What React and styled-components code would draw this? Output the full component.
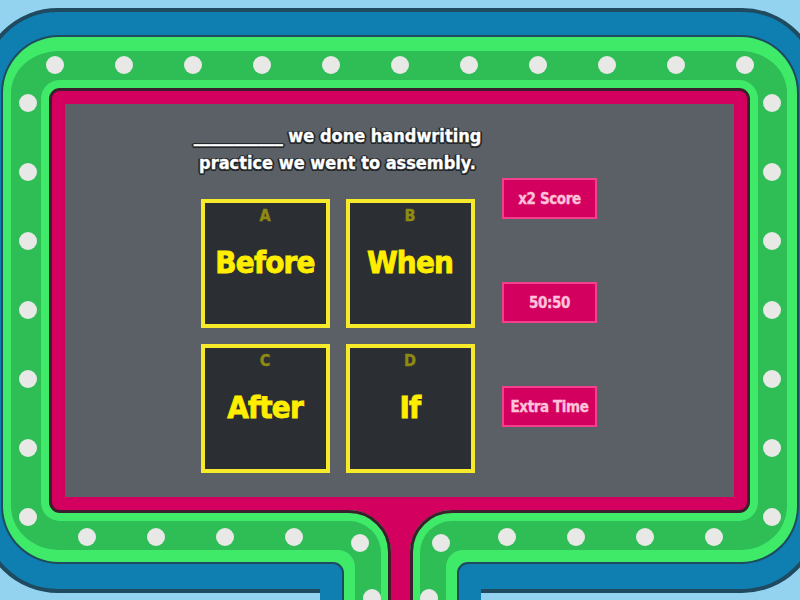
import styled, { createGlobalStyle } from 'styled-components';

const GlobalStyle = createGlobalStyle`
	html,
	body {
		margin: 0;
		padding: 0;
		width: 800px;
		height: 600px;
		overflow: hidden;
		background: #93d3ef;
	}
`;

const Stage = styled.div`
	position: relative;
	width: 800px;
	height: 600px;
	overflow: hidden;
	background: #93d3ef;
	padding-top: 8px;
	box-sizing: border-box;
`;

/* Outer blue cabinet */
const Shell = styled.div`
	box-sizing: border-box;
	width: 840px;
	height: 585px;
	margin-left: -20px;
	padding: 25px 19px 27px;
	background: #0e7fb0;
	border: 4px solid #1f4a5f;
	border-radius: 78px;
`;

/* Green light-bulb ring */
const Ring = styled.div`
	box-sizing: border-box;
	width: 794px;
	height: 525px;
	background: #2fbd55;
	border-style: solid;
	border-color: #3eea68;
	border-width: 14px 10px 12px 8px;
	border-radius: 56px;
	box-shadow: 0 0 0 2px #1f4a5f;

	display: grid;
	grid-template-columns: 41px 1fr 40px;
	grid-template-rows: 40px 1fr 40px;
`;

const DotStrip = styled.div`
	display: flex;
	flex-direction: ${(props) => (props.vertical ? 'column' : 'row')};
	justify-content: ${(props) => props.justify || 'flex-start'};
	gap: 51px;
	padding: ${(props) => props.pad};
	grid-column: ${(props) => props.col};
	grid-row: ${(props) => props.row};
`;

const DotGroup = styled.div`
	display: flex;
	gap: 51px;
`;

const Dot = styled.span`
	display: block;
	width: 18px;
	height: 18px;
	border-radius: 50%;
	background: #e8e8e6;
	flex-shrink: 0;
`;

/* Magenta screen bezel */
const Screen = styled.div`
	grid-column: 2;
	grid-row: 2;
	box-sizing: border-box;
	border: 13px solid #d4005f;
	border-radius: 8px;
	background: #5a6066;
	box-shadow: 0 0 0 3px #3a1f2c, 0 0 0 11px #3eea68;
	display: flex;
	padding-left: 136px;
	position: relative;
	z-index: 1;
`;

const QuizColumn = styled.div`
	width: 273px;
	display: flex;
	flex-direction: column;
	align-items: center;
	padding-top: 18px;
`;

const Question = styled.p`
	margin: 0 -20px;
	width: 313px;
	text-align: center;
	font-family: 'DejaVu Sans Condensed', 'DejaVu Sans', sans-serif;
	font-stretch: condensed;
	font-weight: 700;
	font-size: 18px;
	line-height: 27px;
	color: #ffffff;
	-webkit-text-stroke: 0.3px #ffffff;
	text-shadow: 1px 1px 0 #23272a, -1px -1px 0 #23272a, 1px -1px 0 #23272a,
		-1px 1px 0 #23272a, 0 2px 0 #23272a, 2px 0 0 #23272a, -2px 0 0 #23272a,
		0 -1px 0 #23272a, 1px 2px 0 #23272a, -1px 2px 0 #23272a;
`;

const AnswerGrid = styled.div`
	margin-top: 23px;
	display: grid;
	grid-template-columns: repeat(2, 129px);
	grid-auto-rows: 129px;
	gap: 16px;
`;

const AnswerCard = styled.div`
	box-sizing: border-box;
	border: 4px solid #f6ea2b;
	background: #2b2f33;
	display: flex;
	flex-direction: column;
	align-items: center;
	font-family: 'DejaVu Sans Condensed', 'DejaVu Sans', sans-serif;
	font-stretch: condensed;
	font-weight: 700;
`;

const AnswerLetter = styled.span`
	margin-top: 4px;
	font-size: 16px;
	line-height: 18px;
	color: #8e8a12;
	-webkit-text-stroke: 0.4px #8e8a12;
`;

const AnswerWord = styled.span`
	margin-top: 19px;
	font-size: 31px;
	line-height: 36px;
	color: #ffee00;
	letter-spacing: -0.8px;
	-webkit-text-stroke: 0.8px #ffee00;
`;

const PowerUps = styled.div`
	margin-left: 28px;
	width: 95px;
	padding-top: 74px;
	display: flex;
	flex-direction: column;
	gap: 63px;
`;

const PowerButton = styled.div`
	box-sizing: border-box;
	height: 41px;
	display: flex;
	align-items: center;
	justify-content: center;
	background: #d4005f;
	border: 2px solid #f2408a;
	color: #ffc2da;
	font-family: 'DejaVu Sans Condensed', 'DejaVu Sans', sans-serif;
	font-stretch: condensed;
	font-weight: 700;
	font-size: 15px;
	letter-spacing: -0.4px;
	-webkit-text-stroke: 0.3px #ffc2da;
`;

/* Stand below the screen: drawn over the bottom of the ring */
const Stand = styled.svg`
	position: absolute;
	left: 320px;
	top: 497px;
	z-index: 2;
`;

const answers = [
	{ letter: 'A', word: 'Before' },
	{ letter: 'B', word: 'When' },
	{ letter: 'C', word: 'After' },
	{ letter: 'D', word: 'If' },
];

const powerUps = ['x2 Score', '50:50', 'Extra Time'];

function Dots({ count }) {
	return Array.from({ length: count }, (_, i) => <Dot key={i} />);
}

function Leg() {
	return (
		<g>
			<path d="M0,13 H29 A42,42 0 0 1 71,55 V103 H0 Z" fill="#3eea68" />
			<path
				d="M0,14.5 H29 A40.5,40.5 0 0 1 69.5,55 V103"
				fill="none"
				stroke="#3a1f2c"
				strokeWidth="3"
			/>
			<path
				d="M0,24 H29 A32,32 0 0 1 61,56 V103 H35 V70 A17,17 0 0 0 18,53 H0 Z"
				fill="#2fbd55"
			/>
			<path d="M0,66 H13 A10,10 0 0 1 23,76 V103 H0 Z" fill="#0e7fb0" />
			<path
				d="M0,66 H13 A10,10 0 0 1 23,76 V103"
				fill="none"
				stroke="#1f4a5f"
				strokeWidth="2"
			/>
			<circle cx="40" cy="46" r="9" fill="#e8e8e6" />
			<circle cx="52" cy="101" r="9" fill="#e8e8e6" />
		</g>
	);
}

function App() {
	return (
		<>
			<GlobalStyle />
			<Stage>
				<Shell>
					<Ring>
						<DotStrip col="1 / 4" row="1" pad="5px 0 0 35px">
							<Dots count={11} />
						</DotStrip>
						<DotStrip vertical col="1" row="1 / 4" pad="43px 0 0 8px">
							<Dots count={7} />
						</DotStrip>
						<DotStrip vertical col="3" row="1 / 4" pad="43px 0 0 16px">
							<Dots count={7} />
						</DotStrip>
						<DotStrip
							col="1 / 4"
							row="3"
							justify="space-between"
							pad="18px 64px 0 67px"
						>
							<DotGroup>
								<Dots count={4} />
							</DotGroup>
							<DotGroup>
								<Dots count={4} />
							</DotGroup>
						</DotStrip>

						<Screen>
							<QuizColumn>
								<Question>
									___________ we done handwriting
									<br />
									practice we went to assembly.
								</Question>
								<AnswerGrid>
									{answers.map((a) => (
										<AnswerCard key={a.letter}>
											<AnswerLetter>{a.letter}</AnswerLetter>
											<AnswerWord>{a.word}</AnswerWord>
										</AnswerCard>
									))}
								</AnswerGrid>
							</QuizColumn>
							<PowerUps>
								{powerUps.map((p) => (
									<PowerButton key={p}>{p}</PowerButton>
								))}
							</PowerUps>
						</Screen>
					</Ring>
				</Shell>

				<Stand width="161" height="103" viewBox="0 0 161 103">
					<rect x="0" y="0" width="161" height="103" fill="#d4005f" />
					<Leg />
					<g transform="translate(161 0) scale(-1 1)">
						<Leg />
					</g>
				</Stand>
			</Stage>
		</>
	);
}

export default App;
